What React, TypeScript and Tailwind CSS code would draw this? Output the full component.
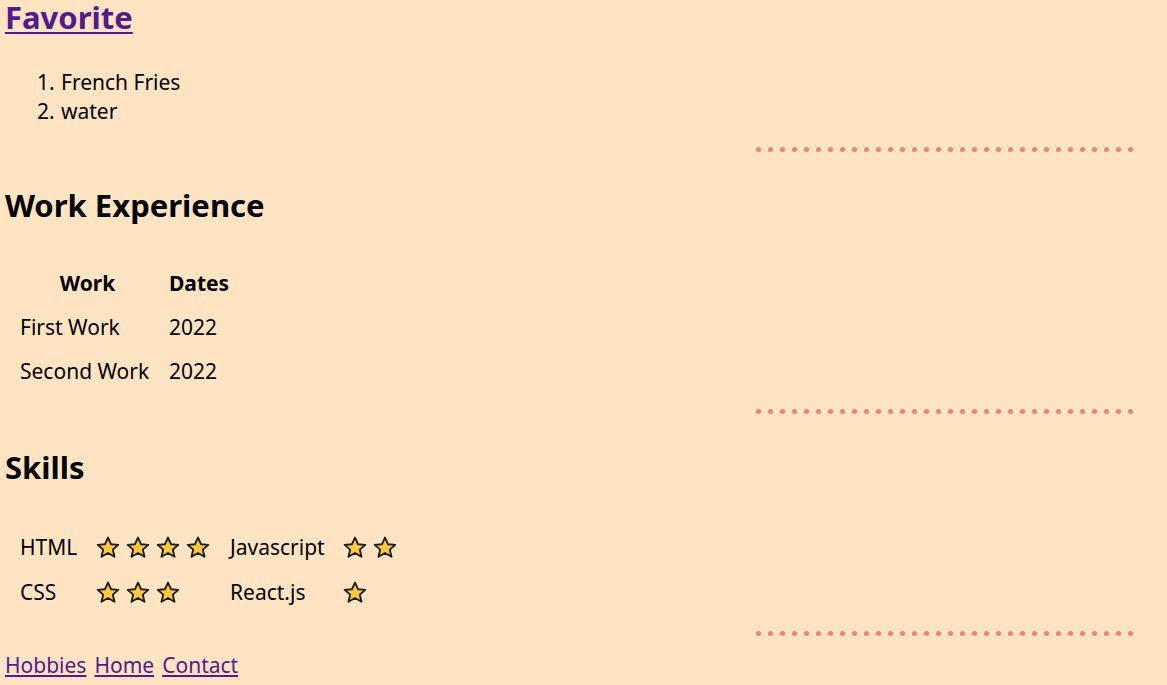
import React from 'react';

const font = { fontFamily: '"Noto Sans", "Noto Sans CJK KR", sans-serif' };

function Star() {
    return (
        <svg width="24" height="23" viewBox="0 0 24 23" className="shrink-0">
            <path
                d="M12 1.6 L15.1 8.3 L22.3 8.9 L16.8 13.6 L18.5 20.8 L12 17 L5.5 20.8 L7.2 13.6 L1.7 8.9 L8.9 8.3 Z"
                fill="#ffc83d"
                stroke="#1c1c1c"
                strokeWidth="1.9"
                strokeLinejoin="round"
            />
        </svg>
    );
}

function Stars({ count }: { count: number }) {
    return (
        <div className="flex gap-[6px]">
            {Array.from({ length: count }).map((_, i) => (
                <Star key={i} />
            ))}
        </div>
    );
}

function DottedRule() {
    return (
        <div className="flex justify-end pr-[34px]">
            <div className="flex gap-[7px]">
                {Array.from({ length: 32 }).map((_, i) => (
                    <span key={i} className="block w-[5px] h-[5px] rounded-full bg-[#f08080]" />
                ))}
            </div>
        </div>
    );
}

const skills = [
    { a: 'HTML', an: 4, b: 'Javascript', bn: 2 },
    { a: 'CSS', an: 3, b: 'React.js', bn: 1 },
];

export default function App() {
    return (
        <div className="min-h-screen w-full bg-[#ffe4c4] text-black text-[21px] pl-[5px]" style={font}>
            <h2 className="text-[31px] font-bold leading-[34px]">
                <a href="#" className="text-[#551a8b] underline underline-offset-[3px] decoration-[2px]">Favorite</a>
            </h2>

            <ol className="list-decimal pl-[55px] mt-[34px] leading-[29px]">
                <li className="pl-[1px]">French Fries</li>
                <li className="pl-[1px]">water</li>
            </ol>

            <div className="mt-[21px]">
                <DottedRule />
            </div>

            <h2 className="text-[31px] font-bold leading-[38px] mt-[34px]">Work Experience</h2>

            <div className="mt-[37px] ml-[15px] w-fit">
                <div className="grid grid-cols-[149px_auto] items-center">
                    <div className="h-[45px] flex items-center justify-center font-bold pr-[14px]">Work</div>
                    <div className="h-[45px] flex items-center font-bold">Dates</div>
                    <div className="h-[44px] flex items-center">First Work</div>
                    <div className="h-[44px] flex items-center">2022</div>
                    <div className="h-[44px] flex items-center">Second Work</div>
                    <div className="h-[44px] flex items-center">2022</div>
                </div>
            </div>

            <div className="mt-[15px]">
                <DottedRule />
            </div>

            <h2 className="text-[31px] font-bold leading-[38px] mt-[34px]">Skills</h2>

            <div className="mt-[39px] ml-[15px] grid grid-cols-[76px_134px_113px_auto] items-center">
                {skills.map((s) => (
                    <React.Fragment key={s.a}>
                        <div className="h-[45px] flex items-center">{s.a}</div>
                        <div className="h-[45px] flex items-center">
                            <Stars count={s.an} />
                        </div>
                        <div className="h-[45px] flex items-center">{s.b}</div>
                        <div className="h-[45px] flex items-center">
                            <Stars count={s.bn} />
                        </div>
                    </React.Fragment>
                ))}
            </div>

            <div className="mt-[16px]">
                <DottedRule />
            </div>

            <div className="mt-[15px] flex gap-[8px] leading-[28px]">
                <a href="#" className="text-[#551a8b] underline">Hobbies</a>
                <a href="#" className="text-[#551a8b] underline">Home</a>
                <a href="#" className="text-[#551a8b] underline">Contact</a>
            </div>
        </div>
    );
}
